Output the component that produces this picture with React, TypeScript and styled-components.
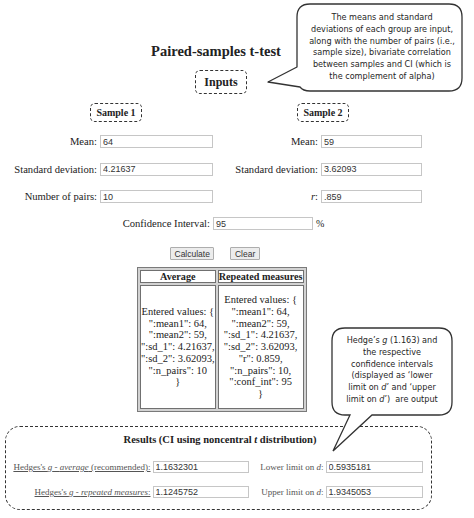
import React from "react";
import styled, { createGlobalStyle } from "styled-components";

const GlobalStyle = createGlobalStyle`
  html, body {
    margin: 0;
    padding: 0;
    background: #fff;
  }
  body {
    font-family: "Liberation Serif", "Times New Roman", serif;
    color: #222;
  }
`;

const Page = styled.div`
  position: relative;
  width: 474px;
  height: 518px;
  overflow: hidden;
`;

const Content = styled.div`
  width: 438px;
  padding-top: 43px;
  display: flex;
  flex-direction: column;
  align-items: flex-start;
`;

const Title = styled.h1`
  align-self: center;
  margin: 0 0 0 -6px;
  font-size: 14.5px;
  line-height: 16px;
  font-weight: bold;
`;

const Badge = styled.div<{ $w: number; $h: number; $size: number }>`
  display: flex;
  align-items: center;
  justify-content: center;
  box-sizing: border-box;
  width: ${(p) => p.$w}px;
  height: ${(p) => p.$h}px;
  border: 1.5px dashed #333;
  border-radius: 5px;
  font-size: ${(p) => p.$size}px;
  font-weight: bold;
`;

const InputsBadge = styled(Badge)`
  align-self: center;
  margin-top: 11px;
  margin-left: 4px;
`;

const SampleHeads = styled.div`
  display: grid;
  grid-template-columns: 232px 182px;
  justify-items: center;
  margin-top: 9px;
`;

const SampleGrid = styled.div`
  display: grid;
  grid-template-columns: 100px 113px 108px 101px;
  grid-auto-rows: 13px;
  row-gap: 14.5px;
  align-items: center;
  margin-top: 13px;
`;

const Label = styled.label`
  justify-self: end;
  padding-right: 3px;
  font-size: 10.6px;
  line-height: 13px;
  white-space: nowrap;
`;

const Field = styled.input<{ $w: number; $h?: number }>`
  box-sizing: border-box;
  width: ${(p) => p.$w}px;
  height: ${(p) => p.$h ?? 13}px;
  margin: 0;
  padding: 0 2px;
  border: 1px solid #c6c6c6;
  background: #fff;
  color: #333;
  font-family: "Liberation Sans", Arial, sans-serif;
  font-size: 9px;
  outline: none;
`;

const CIRow = styled.div`
  display: grid;
  grid-template-columns: 213px 100px auto;
  align-items: center;
  margin-top: 14px;
`;

const Percent = styled.span`
  padding-left: 3px;
  font-size: 10px;
`;

const ButtonRow = styled.div`
  display: flex;
  gap: 16px;
  margin: 17px 0 0 170px;
`;

const Button = styled.button`
  height: 13px;
  margin: 0;
  padding: 0 3.5px;
  border: 1px solid #adadad;
  border-radius: 1px;
  background: #ececec;
  color: #333;
  font-family: "Liberation Sans", Arial, sans-serif;
  font-size: 8.5px;
  line-height: 10px;
`;

const DataTable = styled.table`
  margin: 7px 0 0 137px;
  border-collapse: separate;
  border-spacing: 2px;
  border: 1px solid #7a7a7a;
  background: #d2d2d2;
`;

const HeadCell = styled.th<{ $w: number }>`
  width: ${(p) => p.$w}px;
  padding: 0;
  border: 1px solid #707070;
  background: #fff;
  font-size: 10.2px;
  line-height: 11px;
  white-space: nowrap;
`;

const BodyCell = styled.td`
  height: 122px;
  padding: 0;
  border: 1px solid #707070;
  background: #fff;
  font-size: 10.5px;
  line-height: 11.7px;
  text-align: center;
  vertical-align: middle;
  white-space: nowrap;
`;

const ResultsBox = styled.section`
  box-sizing: border-box;
  width: 427px;
  height: 84px;
  margin: 14px 0 0 5px;
  padding-top: 6px;
  border: 1.5px dashed #333;
  border-radius: 15px;
`;

const ResultsTitle = styled.div`
  text-align: center;
  margin-left: 3px;
  font-size: 10.5px;
  line-height: 13px;
  font-weight: bold;
`;

const ResultsGrid = styled.div`
  display: grid;
  grid-template-columns: 1fr 96px 77px 97px;
  grid-auto-rows: 12px;
  row-gap: 13px;
  align-items: center;
  margin: 15px 8.5px 0 0;
`;

const ResultLabel = styled.span<{ $link?: boolean }>`
  justify-self: end;
  padding-right: 2px;
  color: #555;
  font-size: 9px;
  white-space: nowrap;
  text-decoration: ${(p) => (p.$link ? "underline" : "none")};
`;

const Overlay = styled.svg`
  position: absolute;
  left: 0;
  top: 0;
  pointer-events: none;
`;

const CalloutText = styled.div<{ $x: number; $y: number; $w: number }>`
  position: absolute;
  left: ${(p) => p.$x}px;
  top: ${(p) => p.$y}px;
  width: ${(p) => p.$w}px;
  color: #262626;
  font-family: "DejaVu Sans Condensed", "DejaVu Sans", sans-serif;
  font-size: 9px;
  line-height: 11.8px;
  text-align: center;
  white-space: nowrap;
`;

const avgLines = [
  "Entered values: {",
  '":mean1": 64,',
  '":mean2": 59,',
  '":sd_1": 4.21637,',
  '":sd_2": 3.62093,',
  '":n_pairs": 10',
  "}",
];

const rmLines = [
  "Entered values: {",
  '":mean1": 64,',
  '":mean2": 59,',
  '":sd_1": 4.21637,',
  '":sd_2": 3.62093,',
  '"r": 0.859,',
  '":n_pairs": 10,',
  '":conf_int": 95',
  "}",
];

function Lines({ items }: { items: string[] }) {
  return (
    <>
      {items.map((l, i) => (
        <div key={i}>{l}</div>
      ))}
    </>
  );
}

export default function App() {
  return (
    <>
      <GlobalStyle />
      <Page>
        <Content>
          <Title>Paired-samples t-test</Title>
          <InputsBadge $w={52} $h={24} $size={12}>
            Inputs
          </InputsBadge>

          <SampleHeads>
            <Badge $w={52} $h={19} $size={10}>
              Sample 1
            </Badge>
            <Badge $w={52} $h={19} $size={10}>
              Sample 2
            </Badge>
          </SampleHeads>

          <SampleGrid>
            <Label>Mean:</Label>
            <Field $w={113} defaultValue="64" />
            <Label>Mean:</Label>
            <Field $w={101} defaultValue="59" />

            <Label>Standard deviation:</Label>
            <Field $w={113} defaultValue="4.21637" />
            <Label>Standard deviation:</Label>
            <Field $w={101} defaultValue="3.62093" />

            <Label>Number of pairs:</Label>
            <Field $w={113} defaultValue="10" />
            <Label>
              <i>r</i>:
            </Label>
            <Field $w={101} defaultValue=".859" />
          </SampleGrid>

          <CIRow>
            <Label>Confidence Interval:</Label>
            <Field $w={100} defaultValue="95" />
            <Percent>%</Percent>
          </CIRow>

          <ButtonRow>
            <Button>Calculate</Button>
            <Button>Clear</Button>
          </ButtonRow>

          <DataTable>
            <thead>
              <tr>
                <HeadCell $w={73}>Average</HeadCell>
                <HeadCell $w={84}>Repeated measures</HeadCell>
              </tr>
            </thead>
            <tbody>
              <tr>
                <BodyCell>
                  <Lines items={avgLines} />
                </BodyCell>
                <BodyCell>
                  <Lines items={rmLines} />
                </BodyCell>
              </tr>
            </tbody>
          </DataTable>

          <ResultsBox>
            <ResultsTitle>
              Results (CI using noncentral <i>t</i> distribution)
            </ResultsTitle>
            <ResultsGrid>
              <ResultLabel $link>
                Hedges's <i>g</i> - <i>average</i> (recommended):
              </ResultLabel>
              <Field $w={96} $h={12} defaultValue="1.1632301" />
              <ResultLabel>
                Lower limit on <i>d</i>:
              </ResultLabel>
              <Field $w={97} $h={12} defaultValue="0.5935181" />

              <ResultLabel $link>
                Hedges's <i>g</i> - <i>repeated measures</i>:
              </ResultLabel>
              <Field $w={96} $h={12} defaultValue="1.1245752" />
              <ResultLabel>
                Upper limit on <i>d</i>:
              </ResultLabel>
              <Field $w={97} $h={12} defaultValue="1.9345053" />
            </ResultsGrid>
          </ResultsBox>
        </Content>

        <Overlay width={474} height={518} viewBox="0 0 474 518">
          <path
            d="M297 17 Q297 4 310 4 H449 Q462 4 462 17 V78 Q462 91 449 91 H310 Q303 91 300 87 L268 82 L297 67 Z"
            fill="#fff"
            stroke="#333"
            strokeWidth={1.3}
            strokeLinejoin="round"
          />
          <path
            d="M345 328 H439 Q452 328 452 341 V402 Q452 415 439 415 H372 L333 451 L350 415 H345 Q332 415 332 402 V341 Q332 328 345 328 Z"
            fill="#fff"
            stroke="#333"
            strokeWidth={1.3}
            strokeLinejoin="miter"
          />
        </Overlay>

        <CalloutText $x={297} $y={12} $w={170}>
          The means and standard
          <br />
          deviations of each group are input,
          <br />
          along with the number of pairs (i.e.,
          <br />
          sample size), bivariate correlation
          <br />
          between samples and CI (which is
          <br />
          the complement of alpha)
        </CalloutText>

        <CalloutText $x={332} $y={335} $w={120}>
          Hedge’s <i>g</i> (1.163) and
          <br />
          the respective
          <br />
          confidence intervals
          <br />
          (displayed as ‘lower
          <br />
          limit on <i>d</i>’ and ‘upper
          <br />
          limit on <i>d</i>’) &nbsp;are output
        </CalloutText>
      </Page>
    </>
  );
}
